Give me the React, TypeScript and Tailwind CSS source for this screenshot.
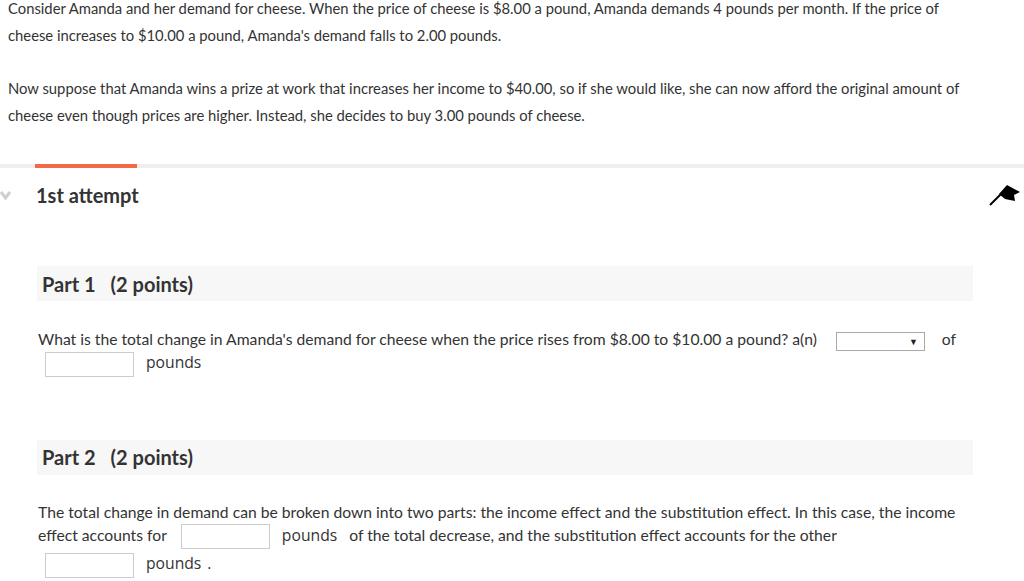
import React from "react";

function Blank({ wide }: { wide?: boolean }) {
  return (
    <span
      className={
        wide
          ? "inline-block w-[89px] h-[25px] border border-[#ccc] bg-white align-middle ml-[14px] mr-[7px]"
          : "inline-block w-[89px] h-[25px] border border-[#ccc] bg-white align-middle mx-[7px]"
      }
    ></span>
  );
}

function Pounds({ dot }: { dot?: boolean }) {
  return (
    <span className="font-['Open_Sans',sans-serif] text-[#333] ml-[5px] mr-[12px]">
      pounds{dot ? <span className="ml-[6px]">.</span> : null}
    </span>
  );
}

function PartHeader({ n }: { n: number }) {
  return (
    <div className="h-[35px] bg-[#f7f7f7] flex items-center px-[5px] text-[20px] font-bold text-[#333]">
      Part {n}
      <span className="ml-[15px]">(2 points)</span>
    </div>
  );
}

export default function App() {
  return (
    <div className="w-[1024px] h-[581px] overflow-hidden bg-white font-['Lato',sans-serif] text-[14.8px] text-[#333]">
      {/* Problem statement */}
      <div className="pl-[8px] pr-[40px] -mt-[5px] leading-[27px]">
        <p>
          Consider Amanda and her demand for cheese. When the price of cheese is $8.00 a pound, Amanda demands 4
          pounds per month. If the price of cheese increases to $10.00 a pound, Amanda's demand falls to 2.00 pounds.
        </p>
        <p className="mt-[26px]">
          Now suppose that Amanda wins a prize at work that increases her income to $40.00, so if she would like, she
          can now afford the original amount of cheese even though prices are higher. Instead, she decides to buy 3.00
          pounds of cheese.
        </p>
      </div>

      {/* Attempt tab bar */}
      <div className="mt-[35px] h-[4px] bg-[#eeeeee]">
        <div className="ml-[35px] w-[102px] h-[4px] bg-[#f06a46]"></div>
      </div>

      <div className="h-[54px] flex items-center">
        <svg width="14" height="12" viewBox="0 0 14 12">
          <polyline points="1,3 5.5,9 10,3" fill="none" stroke="#cfcfcf" strokeWidth="3" />
        </svg>
        <span className="ml-[22px] text-[20px] font-bold text-[#333]">1st attempt</span>
        <svg width="38" height="28" viewBox="0 0 38 28" className="ml-auto">
          <line x1="4" y1="24" x2="16" y2="12" stroke="#000" strokeWidth="2" />
          <polygon points="13,13 21,4 34,11 28,14 29,20 19,18" fill="#000" />
        </svg>
      </div>

      <div className="ml-[37px] w-[936px]">
        {/* Part 1 */}
        <div className="mt-[44px]">
          <PartHeader n={1} />
        </div>
        <div className="mt-[27px] px-[1px] leading-[23px] text-[15.7px]">
          What is the total change in Amanda's demand for cheese when the price rises from $8.00 to $10.00 a pound?
          a(n)
          <span className="inline-flex items-center justify-end w-[89px] h-[19px] border border-[#aaa] bg-white align-middle ml-[19px] mr-[17px] pr-[6px] text-[9px] text-[#222]">
            ▼
          </span>
          of
          <br />
          <Blank />
          <Pounds />
        </div>

        {/* Part 2 */}
        <div className="mt-[63px]">
          <PartHeader n={2} />
        </div>
        <div className="mt-[26px] px-[1px] leading-[23px] text-[15.7px]">
          The total change in demand can be broken down into two parts: the income effect and the substitution effect.
          In this case, the income effect accounts for
          <Blank wide />
          <Pounds />
          of the total decrease, and the substitution effect accounts for the other
          <div className="mt-[3px]">
            <Blank />
            <Pounds dot />
          </div>
        </div>
      </div>
    </div>
  );
}
